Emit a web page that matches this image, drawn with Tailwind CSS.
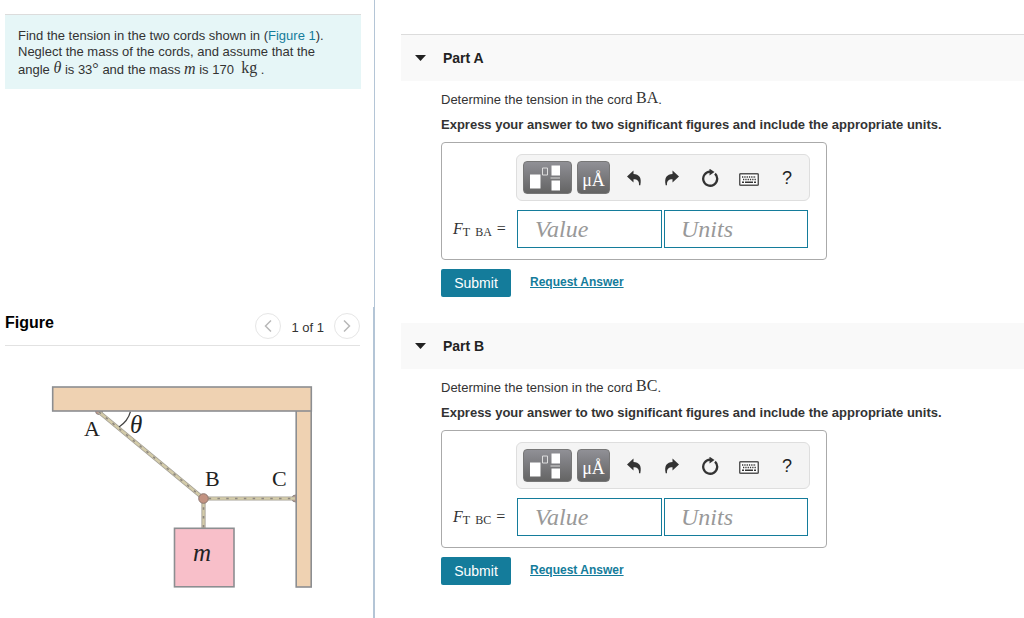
<!DOCTYPE html>
<html lang="en">

<head>
  <meta charset="UTF-8" />
  <meta name="viewport" content="width=device-width, initial-scale=1.0" />
  <title>Tension in Two Cords</title>
  <script src="https://cdn.jsdelivr.net/npm/@tailwindcss/browser@4"></script>
</head>

<body class="bg-white text-[#333333] font-['Liberation_Sans',Arial,sans-serif] text-[13px] leading-4">

  <!-- Shared icons -->
  <svg class="hidden">
    <symbol id="icon-template" viewBox="0 0 30 26">
      <path d="M0 9.500h10.500v14H0z" fill="#fff" />
      <path d="M12.500 3h5v7h-5z" fill="none" stroke="#ddd" />
      <path d="M21.500 0.500h8.500v10h-8.500zM21.500 15.500h8.500v10h-8.500z" fill="#fff" />
      <path d="M20.500 13h10" stroke="#ccc" stroke-width="1.200" />
    </symbol>
    <symbol id="icon-undo" viewBox="0 0 16 16">
      <path d="M1 6.500 7.500 0.500v3.500c5.500 0.300 8.500 3.500 6.800 11.300h-1.300C13.300 11 11.500 9.200 7.500 9.200v3.300z" fill="#333" />
    </symbol>
    <symbol id="icon-reset" viewBox="0 0 18 18">
      <path d="M14 4.600A7 7 0 1 1 9 2.700" fill="none" stroke="#333" stroke-width="2.300" />
      <path d="M8.500 -0.300v6.800l5-3.600z" fill="#333" />
    </symbol>
    <symbol id="icon-keyboard" viewBox="0 0 20 13">
      <rect x="0.700" y="0.800" width="18.600" height="11.400" rx="1" fill="#fff" stroke="#555" stroke-width="1.500" />
      <path d="M3 4h14M4 6.500h13" stroke="#333" stroke-width="1.500" stroke-dasharray="1.300 1" />
      <path d="M3 9.300h2M6 9.300h8M15 9.300h2" stroke="#333" stroke-width="1.400" />
    </symbol>
  </svg>

  <div class="flex min-h-screen">
    <!-- Problem and figure -->
    <aside class="w-[375px] shrink-0 flex flex-col">
      <div class="h-[307px] border-r border-[#b4c5d6] pt-3.5 pl-[5px] pr-[13px]">
        <div class="bg-[#e6f6f7] border-t border-[#dcdcdc] px-[13px] pt-[13px] pb-3">
          <p>Find the tension in the two cords shown in (<a href="#figure" class="text-[#147c9b]">Figure 1</a>).</p>
          <p>Neglect the mass of the cords, and assume that the</p>
          <p class="h-[17px]">angle <i class="font-['Liberation_Serif',serif] text-base leading-none align-[1px]">θ</i> is 33<span class="font-['Liberation_Serif',serif] text-base leading-none">°</span> and the mass <i class="font-['Liberation_Serif',serif] text-base leading-none">m</i> is 170 &nbsp;<span class="font-['Liberation_Serif',serif] text-base leading-none align-[1px]">kg</span> .</p>
        </div>
      </div>

      <div id="figure" class="grow border-r-2 border-[#b4c5d6] pl-[5px] pr-[13px]">
        <div class="flex items-center justify-between h-[39px] border-b border-[#e2e2e2]">
          <h2 class="text-base font-bold text-black pb-1.5">Figure</h2>
          <div class="flex items-center gap-2.5">
            <button type="button" aria-label="Previous figure" class="size-[26px] rounded-full border border-[#e6e6e6] flex items-center justify-center">
              <svg class="w-2 h-3" viewBox="0 0 8 12" fill="none" stroke="#b8b8b8" stroke-width="1.500"><path d="M7 0.500 1.500 6 7 11.500" /></svg>
            </button>
            <span class="pt-1">1 of 1</span>
            <button type="button" aria-label="Next figure" class="size-[26px] rounded-full border border-[#e6e6e6] flex items-center justify-center">
              <svg class="w-2 h-3" viewBox="0 0 8 12" fill="none" stroke="#b8b8b8" stroke-width="1.500"><path d="M1 0.500 6.500 6 1 11.500" /></svg>
            </button>
          </div>
        </div>

        <!-- Beam, cords and hanging mass -->
        <svg class="mt-8 ml-[35px] w-[290px] h-[220px]" viewBox="40 378 290 220" role="img" aria-label="Two cords holding a mass">
          <g fill="#c49a8c" stroke="#8d8583" stroke-width="1">
            <circle cx="99" cy="411" r="3.500" />
            <circle cx="295.500" cy="498.500" r="3.500" />
          </g>
          <g fill="none">
            <path d="M99 412 203.500 498.500H295M203.500 498.500V528" stroke="#a5a197" stroke-width="4.200" />
            <path d="M99 412 203.500 498.500H295M203.500 498.500V528" stroke="#d3cba9" stroke-width="2.400" />
            <path d="M99 412 203.500 498.500H295M203.500 498.500V528" stroke="#8e8880" stroke-width="1.600" stroke-dasharray="2.500 6.300" />
            <path d="M130.500 411.500Q128 421 119 427" stroke="#444" stroke-width="1.200" />
          </g>
          <g fill="#efd2b2" stroke="#8c8e91" stroke-width="1.600">
            <rect x="296.200" y="410" width="15" height="177" />
            <rect x="52.700" y="387" width="258.600" height="24" />
          </g>
          <circle cx="203.500" cy="498.500" r="4.800" fill="#c39382" stroke="#8d7770" />
          <rect x="174.500" y="528.300" width="59.500" height="58.500" fill="#f8bfc9" stroke="#8c8e91" stroke-width="1.600" />
          <g class="font-['Liberation_Serif',serif]" font-size="22" fill="#222">
            <text x="84" y="436">A</text>
            <text x="205" y="486">B</text>
            <text x="272" y="486">C</text>
            <text x="130" y="433" font-style="italic" font-size="25">θ</text>
            <text x="193" y="561" font-style="italic" font-size="25">m</text>
          </g>
        </svg>
      </div>
    </aside>

    <!-- Questions -->
    <main class="grow min-w-0 pl-[26px] pt-[34px]">
      <section class="mb-[25px]">
        <header class="flex items-center h-[47px] bg-[#f9f9f9] border-t border-[#dcdcdc] pl-3.5">
          <svg class="w-[11px] h-1.5 mr-[17px]" viewBox="0 0 11 6"><path d="M0 0h11L5.500 6z" fill="#222" /></svg>
          <h2 class="text-sm font-bold text-[#222222]">Part A</h2>
        </header>
        <div class="pl-10 pt-[9px]">
          <p class="h-[18px] leading-[18px]">Determine the tension in the cord <span class="font-['Liberation_Serif',serif] text-base leading-none align-[1px]">BA</span>.</p>
          <p class="mt-[9px] font-bold">Express your answer to two significant figures and include the appropriate units.</p>
          <div class="mt-[9px] w-[386px] h-[118px] border border-[#aaaaaa] rounded pl-[11px] pt-[11px]">
            <div class="ml-[63px] w-[294px] h-[47px] bg-[#f4f4f4] border border-[#dedede] rounded-md flex items-center pl-1.5">
              <button type="button" aria-label="Templates" class="w-[49px] h-[33px] rounded-sm border border-[#777] bg-linear-to-b from-[#909096] to-[#646464] flex items-center pl-1.5">
                <svg class="w-[30px] h-[26px]"><use href="#icon-template" /></svg>
              </button>
              <button type="button" aria-label="Symbols" class="ml-[5px] w-[33px] h-[33px] rounded-sm border border-[#777] bg-linear-to-b from-[#909096] to-[#646464] text-white font-['Liberation_Serif',serif] text-lg leading-7 pt-1">μÅ</button>
              <button type="button" aria-label="Undo" class="ml-4 mr-[22px]"><svg class="size-4"><use href="#icon-undo" /></svg></button>
              <button type="button" aria-label="Redo" class="mr-[21px]"><svg class="size-4 -scale-x-100"><use href="#icon-undo" /></svg></button>
              <button type="button" aria-label="Reset" class="mr-5"><svg class="size-[18px] overflow-visible"><use href="#icon-reset" /></svg></button>
              <button type="button" aria-label="Keyboard shortcuts" class="pt-1 mr-[23px]"><svg class="w-5 h-[13px]"><use href="#icon-keyboard" /></svg></button>
              <button type="button" aria-label="Help" class="text-lg text-[#222222]">?</button>
            </div>
            <div class="mt-[9px] flex items-center">
              <label for="valueA" class="w-16 flex items-baseline font-['Liberation_Serif',serif] text-base"><i>F</i><sub class="text-xs -bottom-0.5">T</sub><sub class="text-xs -bottom-0.5 ml-[5px]">BA</sub><span class="ml-[5px]">=</span></label>
              <input id="valueA" type="text" placeholder="Value" class="w-[145px] h-[38px] border border-[#147c9b] px-[17px] font-['Liberation_Serif',serif] italic text-2xl placeholder:text-[#999999]" />
              <input aria-label="Units for part A" type="text" placeholder="Units" class="ml-0.5 w-36 h-[38px] border border-[#147c9b] px-4 font-['Liberation_Serif',serif] italic text-2xl placeholder:text-[#999999]" />
            </div>
          </div>
          <div class="mt-[9px] flex items-center gap-[19px]">
            <button type="submit" class="w-[70px] h-7 rounded-xs bg-[#147c9b] text-white text-sm">Submit</button>
            <a href="#" class="text-xs font-bold text-[#147c9b] underline pb-0.5">Request Answer</a>
          </div>
        </div>
      </section>

      <section>
        <header class="flex items-center h-[47px] bg-[#f9f9f9] border-t border-white pl-3.5">
          <svg class="w-[11px] h-1.5 mr-[17px]" viewBox="0 0 11 6"><path d="M0 0h11L5.500 6z" fill="#222" /></svg>
          <h2 class="text-sm font-bold text-[#222222]">Part B</h2>
        </header>
        <div class="pl-10 pt-[9px]">
          <p class="h-[18px] leading-[18px]">Determine the tension in the cord <span class="font-['Liberation_Serif',serif] text-base leading-none align-[1px]">BC</span>.</p>
          <p class="mt-[9px] font-bold">Express your answer to two significant figures and include the appropriate units.</p>
          <div class="mt-[9px] w-[386px] h-[118px] border border-[#aaaaaa] rounded pl-[11px] pt-[11px]">
            <div class="ml-[63px] w-[294px] h-[47px] bg-[#f4f4f4] border border-[#dedede] rounded-md flex items-center pl-1.5">
              <button type="button" aria-label="Templates" class="w-[49px] h-[33px] rounded-sm border border-[#777] bg-linear-to-b from-[#909096] to-[#646464] flex items-center pl-1.5">
                <svg class="w-[30px] h-[26px]"><use href="#icon-template" /></svg>
              </button>
              <button type="button" aria-label="Symbols" class="ml-[5px] w-[33px] h-[33px] rounded-sm border border-[#777] bg-linear-to-b from-[#909096] to-[#646464] text-white font-['Liberation_Serif',serif] text-lg leading-7 pt-1">μÅ</button>
              <button type="button" aria-label="Undo" class="ml-4 mr-[22px]"><svg class="size-4"><use href="#icon-undo" /></svg></button>
              <button type="button" aria-label="Redo" class="mr-[21px]"><svg class="size-4 -scale-x-100"><use href="#icon-undo" /></svg></button>
              <button type="button" aria-label="Reset" class="mr-5"><svg class="size-[18px] overflow-visible"><use href="#icon-reset" /></svg></button>
              <button type="button" aria-label="Keyboard shortcuts" class="pt-1 mr-[23px]"><svg class="w-5 h-[13px]"><use href="#icon-keyboard" /></svg></button>
              <button type="button" aria-label="Help" class="text-lg text-[#222222]">?</button>
            </div>
            <div class="mt-[9px] flex items-center">
              <label for="valueB" class="w-16 flex items-baseline font-['Liberation_Serif',serif] text-base"><i>F</i><sub class="text-xs -bottom-0.5">T</sub><sub class="text-xs -bottom-0.5 ml-[5px]">BC</sub><span class="ml-[5px]">=</span></label>
              <input id="valueB" type="text" placeholder="Value" class="w-[145px] h-[38px] border border-[#147c9b] px-[17px] font-['Liberation_Serif',serif] italic text-2xl placeholder:text-[#999999]" />
              <input aria-label="Units for part B" type="text" placeholder="Units" class="ml-0.5 w-36 h-[38px] border border-[#147c9b] px-4 font-['Liberation_Serif',serif] italic text-2xl placeholder:text-[#999999]" />
            </div>
          </div>
          <div class="mt-[9px] flex items-center gap-[19px]">
            <button type="submit" class="w-[70px] h-7 rounded-xs bg-[#147c9b] text-white text-sm">Submit</button>
            <a href="#" class="text-xs font-bold text-[#147c9b] underline pb-0.5">Request Answer</a>
          </div>
        </div>
      </section>
    </main>
  </div>
</body>

</html>
